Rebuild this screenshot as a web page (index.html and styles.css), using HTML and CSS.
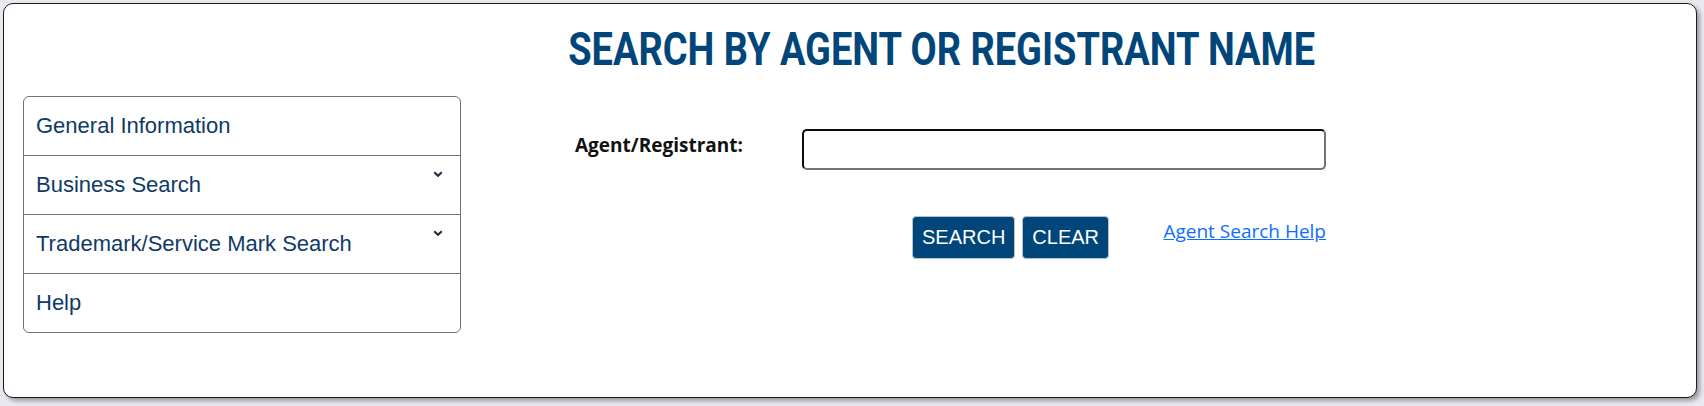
FILE: index.html
```html
<!DOCTYPE html>
<html lang="en">
<head>
<meta charset="utf-8">
<title>Search by Agent or Registrant Name</title>
<link rel="stylesheet" href="styles.css">
</head>
<body>
<div class="card">
  <aside class="side">
    <nav class="menu">
      <a class="menu-item" href="#">General Information</a>
      <a class="menu-item" href="#">Business Search
        <svg class="chev" width="10" height="7" viewBox="0 0 10 7"><path d="M1.2 1.2 L5 4.8 L8.8 1.2" fill="none" stroke="#1e2a3a" stroke-width="2"/></svg>
      </a>
      <a class="menu-item" href="#">Trademark/Service Mark Search
        <svg class="chev" width="10" height="7" viewBox="0 0 10 7"><path d="M1.2 1.2 L5 4.8 L8.8 1.2" fill="none" stroke="#1e2a3a" stroke-width="2"/></svg>
      </a>
      <a class="menu-item" href="#">Help</a>
    </nav>
  </aside>
  <main class="main">
    <h1 class="title"><span class="title-text">SEARCH BY AGENT OR REGISTRANT NAME</span></h1>
    <form class="form">
      <label class="label" for="agent">Agent/Registrant:</label>
      <input class="field" id="agent" type="text">
      <div class="actions">
        <button class="btn" type="button">SEARCH</button>
        <button class="btn" type="button">CLEAR</button>
        <a class="help" href="#">Agent Search Help</a>
      </div>
    </form>
  </main>
</div>
</body>
</html>
```
FILE: styles.css
```css
html, body {
  margin: 0;
  padding: 0;
}
body {
  background: #e9e9ef;
  padding: 3px;
  width: 1704px;
  height: 406px;
  box-sizing: border-box;
  overflow: hidden;
}
.card {
  box-sizing: border-box;
  width: 1694px;
  height: 395px;
  background: #fff;
  border: 1px solid #1b1b1b;
  border-radius: 10px;
  box-shadow: 3px 3px 4px rgba(60, 60, 70, 0.45);
  padding: 19px 0 0 19px;
  display: grid;
  grid-template-columns: 438px 962px;
  align-items: start;
}
.side {
  margin-top: 73px;
}
.menu {
  display: flex;
  flex-direction: column;
  border: 1px solid #6c737c;
  border-radius: 6px;
  overflow: hidden;
}
.menu-item {
  position: relative;
  display: flex;
  align-items: center;
  height: 58px;
  padding: 0 12px 0 12px;
  font-family: "Liberation Sans", Arial, sans-serif;
  font-size: 22px;
  color: #0f3a66;
  text-decoration: none;
}
.menu-item + .menu-item {
  border-top: 1px solid #6c737c;
}
.chev {
  position: absolute;
  right: 17px;
  top: 15px;
}
.main {
  display: flex;
  flex-direction: column;
}
.title {
  margin: 0;
  text-align: center;
  font-family: Roboto, "Liberation Sans", sans-serif;
  font-weight: 700;
  font-size: 46px;
  line-height: 53px;
  color: #00467a;
}
.title-text {
  display: inline-block;
  transform: scaleX(0.825);
  transform-origin: center;
  white-space: nowrap;
}
.form {
  margin: 53px 0 0 114px;
  width: 751px;
  display: grid;
  grid-template-columns: 227px 524px;
  row-gap: 46px;
  align-items: start;
}
.label {
  margin-top: 3px;
  font-family: "Open Sans", sans-serif;
  font-weight: 700;
  font-size: 19px;
  line-height: 26px;
  color: #111;
}
.field {
  box-sizing: border-box;
  height: 41px;
  width: 524px;
  margin: 0;
  border-style: solid;
  border-width: 2px;
  border-color: #0a0a0a #70757c #70757c #0a0a0a;
  border-radius: 5px;
  background: #fff;
}
.actions {
  grid-column: 2;
  display: flex;
  align-items: flex-start;
  gap: 7px;
  padding-left: 110px;
}
.btn {
  box-sizing: border-box;
  height: 43px;
  padding: 0 9px;
  margin: 0;
  border: 1px solid #b8c2cc;
  border-radius: 4px;
  background: #00467a;
  color: #fff;
  font-family: "Liberation Sans", Arial, sans-serif;
  font-size: 20px;
  line-height: 23px;
}
.help {
  margin-left: auto;
  margin-top: 2px;
  font-family: "Open Sans", sans-serif;
  font-size: 19px;
  line-height: 26px;
  color: #0d6efd;
  text-decoration: underline;
}
```
